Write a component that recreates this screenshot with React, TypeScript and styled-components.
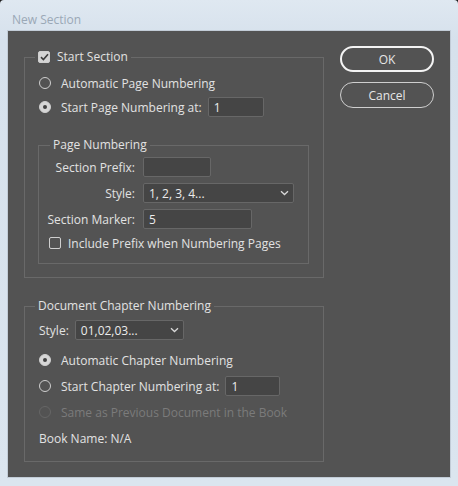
import styled, { createGlobalStyle } from 'styled-components';

const GlobalStyle = createGlobalStyle`
    html, body {
        margin: 0;
        padding: 0;
        background: #1b1b1b;
    }
    body {
        font-family: "Open Sans", "Noto Sans", sans-serif;
        font-size: 12px;
    }
`;

const Window = styled.div`
    width: 458px;
    height: 486px;
    box-sizing: border-box;
    display: flex;
    flex-direction: column;
    background: linear-gradient(#dfe8f1, #d6e1ec 40px, #dbe5ef);
    border-radius: 4px 4px 0 0;
    padding: 0 8px 9px;
`;

const TitleBar = styled.div`
    height: 31px;
    box-sizing: border-box;
    padding: 12px 0 0 4px;
    line-height: 16px;
    color: #9aa8b6;
    font-size: 12px;
`;

const Panel = styled.div`
    flex: 1;
    display: flex;
    gap: 16px;
    padding: 15px 16px 0;
    background: #535353;
    color: #e2e2e2;
    box-shadow: 0 0 0 1px #c2ccd7;
`;

const Main = styled.div`
    width: 300px;
    display: flex;
    flex-direction: column;
    gap: 20px;
    padding-top: 3px;
`;

const Side = styled.div`
    width: 94px;
    display: flex;
    flex-direction: column;
    gap: 10px;
`;

const Button = styled.button<{ $primary?: boolean }>`
    height: 26px;
    box-sizing: border-box;
    border-radius: 13px;
    background: transparent;
    border: ${(p) => (p.$primary ? '2px solid #f4f4f4' : '1px solid #cfcfcf')};
    color: #e6e6e6;
    font: inherit;
    font-size: 12px;
    padding: 0;
`;

const Group = styled.fieldset<{ $inner?: boolean; $pad?: string }>`
    margin: ${(p) => (p.$inner ? '20px 0 0 -1px' : '0')};
    min-width: 0;
    border: 1px solid #696969;
    padding: ${(p) => p.$pad ?? '8px 14px 13px 14px'};
    display: flex;
    flex-direction: column;
`;

const Legend = styled.legend<{ $inner?: boolean }>`
    padding: 0 3px;
    margin-left: ${(p) => (p.$inner ? '1px' : '-4px')};
    line-height: 16px;
    height: 16px;
    display: flex;
    align-items: center;
    gap: 7px;
`;

const Row = styled.div<{ $after?: number }>`
    display: flex;
    align-items: center;
    height: 20px;
    gap: 6px;
    margin-bottom: ${(p) => p.$after ?? 0}px;
    white-space: nowrap;
`;

const Option = styled.label<{ $disabled?: boolean; $gap?: number }>`
    display: flex;
    align-items: center;
    gap: ${(p) => p.$gap ?? 10}px;
    color: ${(p) => (p.$disabled ? '#7b7b7b' : 'inherit')};
`;

const RadioDot = styled.span<{ $on?: boolean; $disabled?: boolean }>`
    width: 12px;
    height: 12px;
    box-sizing: border-box;
    border-radius: 50%;
    border: 1px solid ${(p) => (p.$disabled ? '#666' : '#cfcfcf')};
    background: ${(p) => (p.$on ? '#d6d6d6' : 'transparent')};
    display: flex;
    align-items: center;
    justify-content: center;
    flex: none;

    &::after {
        content: '';
        width: 4px;
        height: 4px;
        border-radius: 50%;
        background: ${(p) => (p.$on ? '#404040' : 'transparent')};
    }
`;

const Box = styled.span<{ $on?: boolean }>`
    width: 12px;
    height: 12px;
    box-sizing: border-box;
    border-radius: 2px;
    border: 1px solid #cfcfcf;
    background: ${(p) => (p.$on ? '#d4d4d4' : 'transparent')};
    display: flex;
    align-items: center;
    justify-content: center;
    flex: none;
`;

const Field = styled.input<{ $w: number }>`
    width: ${(p) => p.$w}px;
    height: 20px;
    box-sizing: border-box;
    background: #454545;
    border: 1px solid #676767;
    border-radius: 2px;
    color: #ececec;
    font: inherit;
    font-size: 12px;
    padding: 0 5px;
    outline: none;
`;

const Select = styled.div<{ $w: number }>`
    width: ${(p) => p.$w}px;
    height: 20px;
    box-sizing: border-box;
    background: #454545;
    border: 1px solid #676767;
    border-radius: 2px;
    color: #ececec;
    padding: 0 4px 0 5px;
    display: flex;
    align-items: center;
    justify-content: space-between;
`;

const FormGrid = styled.div`
    display: grid;
    grid-template-columns: 86px auto;
    column-gap: 8px;
    row-gap: 6px;
    align-items: center;
    justify-items: start;
    margin-bottom: 4px;
`;

const FieldLabel = styled.span`
    justify-self: end;
    white-space: nowrap;
`;

const Radio = ({ on, disabled, children }: { on?: boolean; disabled?: boolean; children: string }) => (
    <Option $disabled={disabled}>
        <RadioDot $on={on} $disabled={disabled} />
        {children}
    </Option>
);

const Check = ({ on }: { on?: boolean }) => (
    <Box $on={on}>
        {on && (
            <svg width="9" height="8" viewBox="0 0 9 8">
                <path d="M1 4.2 L3.4 6.5 L8 1.2" fill="none" stroke="#3c3c3c" strokeWidth="1.6" />
            </svg>
        )}
    </Box>
);

const Chevron = () => (
    <svg width="9" height="6" viewBox="0 0 9 6">
        <path d="M1 1.2 L4.5 4.5 L8 1.2" fill="none" stroke="#d8d8d8" strokeWidth="1.3" />
    </svg>
);

export default function App() {
    return (
        <Window>
            <GlobalStyle />
            <TitleBar>New Section</TitleBar>
            <Panel>
                <Main>
                    <Group>
                        <Legend>
                            <Check on />
                            Start Section
                        </Legend>
                        <Row $after={4}>
                            <Radio>Automatic Page Numbering</Radio>
                        </Row>
                        <Row>
                            <Radio on>Start Page Numbering at:</Radio>
                            <Field $w={56} defaultValue="1" />
                        </Row>
                        <Group $inner $pad="4px 14px 10px 10px">
                            <Legend $inner>Page Numbering</Legend>
                            <FormGrid>
                                <FieldLabel>Section Prefix:</FieldLabel>
                                <Field $w={68} defaultValue="" />
                                <FieldLabel>Style:</FieldLabel>
                                <Select $w={151}>
                                    1, 2, 3, 4...
                                    <Chevron />
                                </Select>
                                <FieldLabel>Section Marker:</FieldLabel>
                                <Field $w={109} defaultValue="5" />
                            </FormGrid>
                            <Row>
                                <Option $gap={7}>
                                    <Check />
                                    Include Prefix when Numbering Pages
                                </Option>
                            </Row>
                        </Group>
                    </Group>

                    <Group $pad="6px 14px 13px 14px">
                        <Legend>Document Chapter Numbering</Legend>
                        <Row $after={10}>
                            Style:
                            <Select $w={109}>
                                01,02,03...
                                <Chevron />
                            </Select>
                        </Row>
                        <Row $after={6}>
                            <Radio on>Automatic Chapter Numbering</Radio>
                        </Row>
                        <Row $after={6}>
                            <Radio>Start Chapter Numbering at:</Radio>
                            <Field $w={55} defaultValue="1" />
                        </Row>
                        <Row $after={6}>
                            <Radio disabled>Same as Previous Document in the Book</Radio>
                        </Row>
                        <Row>Book Name: N/A</Row>
                    </Group>
                </Main>
                <Side>
                    <Button $primary>OK</Button>
                    <Button>Cancel</Button>
                </Side>
            </Panel>
        </Window>
    );
}
